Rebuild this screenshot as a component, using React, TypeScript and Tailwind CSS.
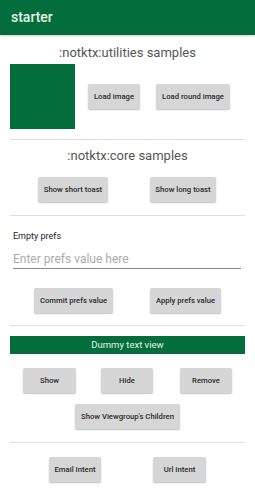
import React from "react";

function Btn({ children, className = "" }: { children: React.ReactNode; className?: string }) {
  return (
    <div
      className={
        "h-[25px] flex items-center justify-center bg-[#d6d6d6] rounded-[2px] shadow-[0_1px_1.5px_rgba(0,0,0,0.25)] text-[7.7px] font-medium text-[#2a2a2a] whitespace-nowrap " +
        className
      }
    >
      {children}
    </div>
  );
}

function Divider({ className = "" }: { className?: string }) {
  return <div className={"mx-[10px] h-px bg-[#dedede] " + className} />;
}

export default function App() {
  return (
    <div className="w-[255px] h-[500px] bg-white overflow-hidden" style={{ fontFamily: "Roboto, 'Liberation Sans', sans-serif" }}>
      <div className="h-[35px] bg-[#036e3b] flex items-center px-[11px] shadow-[0_1px_2px_rgba(0,0,0,0.2)]">
        <span className="text-[14px] font-medium text-[#e6f2ea]">starter</span>
      </div>

      <div className="mt-[10px] text-center text-[13px] text-[#555] leading-[16px]">:notktx:utilities samples</div>
      <div className="mt-[3px] flex items-center">
        <div className="ml-[10px] w-[65px] h-[65px] bg-[#036e3b]" />
        <Btn className="ml-[13px] w-[52px]">Load image</Btn>
        <Btn className="ml-[16px] w-[74px]">Load round image</Btn>
      </div>
      <Divider className="mt-[10px]" />

      <div className="mt-[8px] text-center text-[13px] text-[#555] leading-[16px]">:notktx:core samples</div>
      <div className="mt-[13px] flex">
        <Btn className="ml-[38px] w-[70px]">Show short toast</Btn>
        <Btn className="ml-[42px] w-[66px]">Show long toast</Btn>
      </div>
      <Divider className="mt-[13px]" />

      <div className="mt-[15px] ml-[13px] text-[9px] text-[#222] leading-[11px]">Empty prefs</div>
      <div className="mt-[10px] ml-[13px] mr-[14px] border-b border-[#8a8a8a] pb-[1px] text-[12px] text-[#aaa] leading-[15px]">
        Enter prefs value here
      </div>
      <div className="mt-[19px] flex">
        <Btn className="ml-[34px] w-[79px]">Commit prefs value</Btn>
        <Btn className="ml-[37px] w-[71px]">Apply prefs value</Btn>
      </div>
      <Divider className="mt-[12px]" />

      <div className="mt-[10px] mx-[10px] h-[18px] bg-[#036e3b] flex items-center justify-center text-[9.5px] text-[#e6f2ea]">
        Dummy text view
      </div>
      <div className="mt-[14px] flex">
        <Btn className="ml-[23px] w-[53px]">Show</Btn>
        <Btn className="ml-[25px] w-[52px]">Hide</Btn>
        <Btn className="ml-[27px] w-[52px]">Remove</Btn>
      </div>
      <div className="mt-[11px] flex justify-center">
        <Btn className="w-[105px]">Show Viewgroup's Children</Btn>
      </div>
      <Divider className="mt-[13px]" />
      <div className="mt-[14px] flex">
        <Btn className="ml-[49px] w-[52px]">Email Intent</Btn>
        <Btn className="ml-[52px] w-[53px]">Url Intent</Btn>
      </div>
    </div>
  );
}
